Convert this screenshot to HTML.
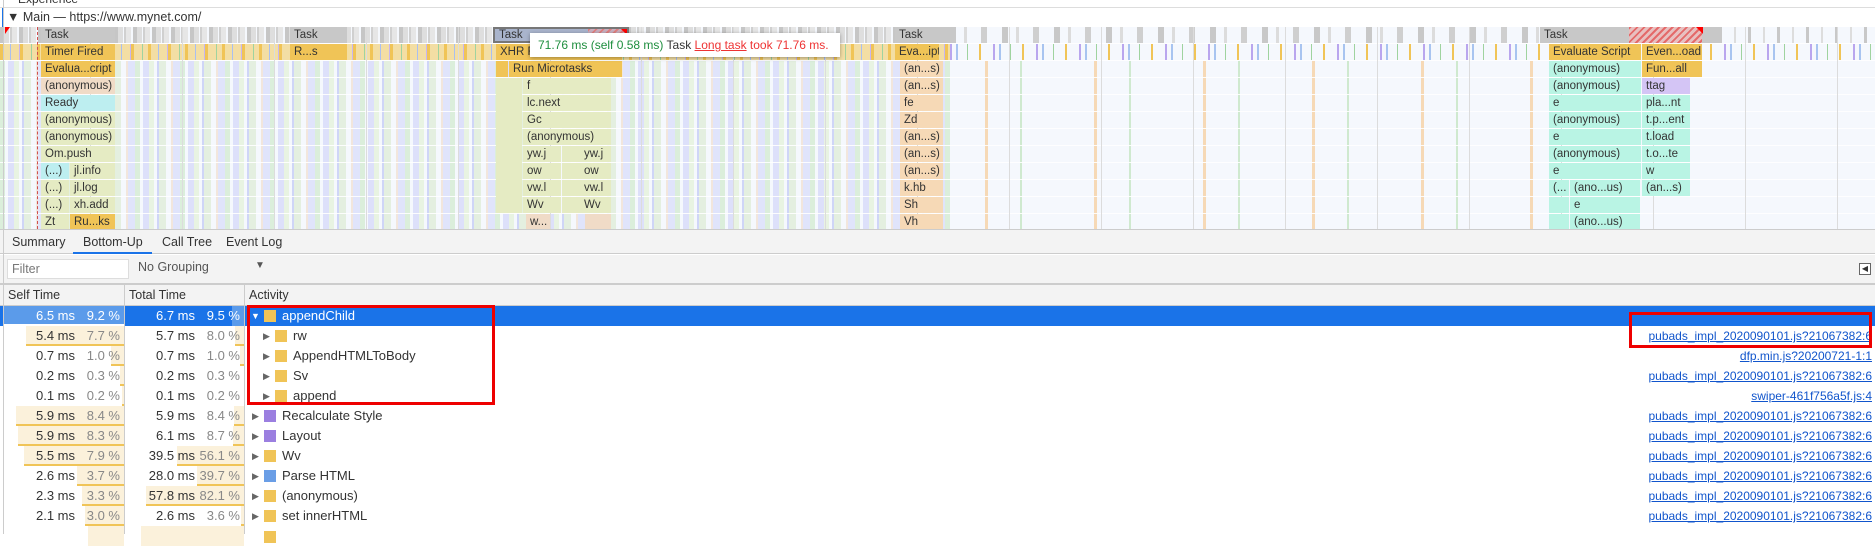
<!DOCTYPE html>
<html><head><meta charset="utf-8"><style>
*{box-sizing:border-box;margin:0;padding:0}
body{width:1875px;height:534px;overflow:hidden;background:#fff;font-family:"Liberation Sans",sans-serif;color:#333;position:relative}
.a{position:absolute}
.b{position:absolute;height:16px;font-size:11.5px;line-height:16px;padding-left:4px;white-space:nowrap;overflow:hidden;color:#333}
.g{position:absolute;top:27px;height:202px;width:1px;background:#dcdcdc}
.y{background:#f0c457}.p{background:#f0dbc7}.c{background:#bdeef0}.gr{background:#e5ebc3}.t{background:#b9f4e4}.pe{background:#f6d9b6}.gy{background:#c8c8c8}
.row{position:absolute;left:0;width:1875px;height:20px;font-size:13px;line-height:20px}
.v{position:absolute;text-align:right;top:0}
.v1{right:1800px}.v2{right:1755px;color:#888}.v3{right:1680px}.v4{right:1635px;color:#888}
.bar{position:absolute;top:0;height:20px;background:#fbf1db;border-bottom:2px solid #f0c457}
.ic{position:absolute;top:4px;width:12px;height:12px}
.ar{position:absolute;top:0;font-size:9px;color:#666}
.lk{position:absolute;right:3px;top:0;color:#1155cc;text-decoration:underline;font-size:12px}
</style></head><body>
<div class="a" style="left:0;top:0;width:1875px;height:8px;border-bottom:1px solid #ddd;overflow:hidden"><span style="position:absolute;left:18px;top:-8px;font-size:12px">Experience</span></div>
<div class="a" style="left:2px;top:8px;width:2px;height:20px;background:#1a73e8"></div>
<div class="a" style="left:7px;top:10px;font-size:12.5px;color:#333">▼ Main — https://www.mynet.com/</div>
<div class="a" style="left:0;top:27px;width:1875px;height:202px;background:#f5f8fd"></div>
<div class="a" style="left:0;top:27px;width:1290px;height:16px;background:repeating-linear-gradient(90deg,#c6c6c6 0 4px,#dedede 4px 9px,#f5f8fd 9px 10px,#d0d0d0 10px 12px,#e6e6e6 12px 17px,#f5f8fd 17px 19px)"></div>
<div class="a" style="left:950px;top:27px;width:590px;height:16px;background:repeating-linear-gradient(90deg,#c8c8c8 0 6px,#f5f8fd 6px 14px,#dcdcdc 14px 17px,#f5f8fd 17px 31px,#cfcfcf 31px 37px,#f5f8fd 37px 52px)"></div>
<div class="a" style="left:1719px;top:27px;width:156px;height:16px;background:repeating-linear-gradient(90deg,#c8c8c8 0 3px,#f5f8fd 3px 15px,#ddd 15px 17px,#f5f8fd 17px 29px)"></div>
<div class="a" style="left:0;top:44px;width:950px;height:16px;background:repeating-linear-gradient(90deg,#f0c457 0 3px,#f3dea4 3px 10px,#a9bff0 10px 11px,#f3dea4 11px 19px,#c8b6f0 19px 20px,#f0c457 20px 23px,#f3dea4 23px 31px,#9fd39f 31px 32px,#f3dea4 32px 37px)"></div>
<div class="a" style="left:950px;top:44px;width:925px;height:16px;background:repeating-linear-gradient(90deg,#b9a6ee 0 2px,#f5f8fd 2px 6px,#a8c4f0 6px 8px,#f5f8fd 8px 17px,#9fd39f 17px 18px,#f5f8fd 18px 29px,#f0c457 29px 31px,#f5f8fd 31px 43px)"></div>
<div class="a" style="left:0;top:61px;width:950px;height:168px;background:repeating-linear-gradient(90deg,#dbeedb 0 5px,#f5f8fd 5px 8px,#dde0fa 8px 14px,#e8f3e2 14px 19px,#f5f8fd 19px 22px,#cfd5f7 22px 24px,#e4efe0 24px 31px,#f5f8fd 31px 36px,#f2e6dc 36px 38px,#e0e4fb 38px 45px)"></div>
<div class="a" style="left:950px;top:61px;width:600px;height:168px;background:repeating-linear-gradient(90deg,#f5f8fd 0 35px,#f6d9b6 35px 38px,#f5f8fd 38px 70px,#cfe9cf 70px 72px,#f5f8fd 72px 109px)"></div>
<div class="a" style="left:0;top:27px;width:1875px;height:202px;background:repeating-linear-gradient(180deg,transparent 0 16px,rgba(255,255,255,.9) 16px 17px)"></div>
<div class="g" style="left:90px"></div><div class="g" style="left:182px"></div><div class="g" style="left:274px"></div><div class="g" style="left:366px"></div><div class="g" style="left:458px"></div><div class="g" style="left:550px"></div><div class="g" style="left:641px"></div><div class="g" style="left:733px"></div><div class="g" style="left:825px"></div><div class="g" style="left:917px"></div><div class="g" style="left:1009px"></div><div class="g" style="left:1101px"></div><div class="g" style="left:1193px"></div><div class="g" style="left:1285px"></div><div class="g" style="left:1377px"></div><div class="g" style="left:1469px"></div><div class="g" style="left:1561px"></div><div class="g" style="left:1653px"></div><div class="g" style="left:1745px"></div><div class="g" style="left:1837px"></div>
<div class="a" style="left:5px;top:27px;width:0;height:0;border-left:5px solid red;border-bottom:7px solid transparent"></div>
<div class="a" style="left:37px;top:27px;height:202px;border-left:1px dashed #d05050"></div>
<div class="b gy" style="left:41px;top:27px;width:74px">Task</div>
<div class="b y" style="left:41px;top:44px;width:74px">Timer Fired</div>
<div class="b y" style="left:41px;top:61px;width:74px">Evalua...cript</div>
<div class="b p" style="left:41px;top:78px;width:74px">(anonymous)</div>
<div class="b c" style="left:41px;top:95px;width:74px">Ready</div>
<div class="b gr" style="left:41px;top:112px;width:74px">(anonymous)</div>
<div class="b gr" style="left:41px;top:129px;width:74px">(anonymous)</div>
<div class="b gr" style="left:41px;top:146px;width:74px">Om.push</div>
<div class="b c" style="left:41px;top:163px;width:28px">(...)</div><div class="b gr" style="left:70px;top:163px;width:45px">jl.info</div>
<div class="b gr" style="left:41px;top:180px;width:28px">(...)</div><div class="b gr" style="left:70px;top:180px;width:45px">jl.log</div>
<div class="b gr" style="left:41px;top:197px;width:28px">(...)</div><div class="b gr" style="left:70px;top:197px;width:45px">xh.add</div>
<div class="b gr" style="left:41px;top:214px;width:28px;height:15px">Zt</div><div class="b y" style="left:70px;top:214px;width:45px;height:15px">Ru...ks</div>
<div class="b gy" style="left:290px;top:27px;width:57px">Task</div>
<div class="b y" style="left:290px;top:44px;width:57px">R...s</div>
<div class="b" style="left:493px;top:27px;width:136px;background:#a9b4cc;border:2px solid #777;line-height:12px">Task</div>
<div class="a" style="left:588px;top:29px;width:39px;height:12px;background:repeating-linear-gradient(135deg,#e08080 0 2px,#c9b0c0 2px 5px)"></div>
<div class="a" style="left:621px;top:29px;width:0;height:0;border-left:6px solid transparent;border-top:6px solid red"></div>
<div class="b y" style="left:496px;top:44px;width:126px">XHR R</div>
<div class="b y" style="left:496px;top:61px;width:12px"></div><div class="b y" style="left:509px;top:61px;width:113px">Run Microtasks</div>
<div class="b gr" style="left:496px;top:78px;width:26px;height:135px"></div>
<div class="b gr" style="left:523px;top:78px;width:88px">f</div>
<div class="b gr" style="left:523px;top:95px;width:88px">lc.next</div>
<div class="b gr" style="left:523px;top:112px;width:88px">Gc</div>
<div class="b gr" style="left:523px;top:129px;width:88px">(anonymous)</div>
<div class="b gr" style="left:523px;top:146px;width:38px">yw.j</div><div class="b gr" style="left:562px;top:146px;width:49px;padding-left:22px">yw.j</div>
<div class="b gr" style="left:523px;top:163px;width:38px">ow</div><div class="b gr" style="left:562px;top:163px;width:49px;padding-left:22px">ow</div>
<div class="b gr" style="left:523px;top:180px;width:38px">vw.l</div><div class="b gr" style="left:562px;top:180px;width:49px;padding-left:22px">vw.l</div>
<div class="b gr" style="left:523px;top:197px;width:38px">Wv</div><div class="b gr" style="left:562px;top:197px;width:49px;padding-left:22px">Wv</div>
<div class="b p" style="left:526px;top:214px;width:24px;height:15px">w...</div><div class="b p" style="left:585px;top:214px;width:26px;height:15px"></div>
<div class="b gy" style="left:895px;top:27px;width:55px">Task</div>
<div class="b y" style="left:895px;top:44px;width:44px">Eva...ipt</div>
<div class="b pe" style="left:900px;top:61px;width:43px">(an...s)</div>
<div class="b pe" style="left:900px;top:78px;width:43px">(an...s)</div>
<div class="b pe" style="left:900px;top:95px;width:43px">fe</div>
<div class="b pe" style="left:900px;top:112px;width:43px">Zd</div>
<div class="b pe" style="left:900px;top:129px;width:43px">(an...s)</div>
<div class="b pe" style="left:900px;top:146px;width:43px">(an...s)</div>
<div class="b pe" style="left:900px;top:163px;width:43px">(an...s)</div>
<div class="b pe" style="left:900px;top:180px;width:43px">k.hb</div>
<div class="b pe" style="left:900px;top:197px;width:43px">Sh</div>
<div class="b pe" style="left:900px;top:214px;width:43px;height:15px">Vh</div>
<div class="b gy" style="left:1540px;top:27px;width:179px">Task</div>
<div class="a" style="left:1629px;top:27px;width:73px;height:16px;background:repeating-linear-gradient(135deg,#e46a6a 0 2px,#e8c0c0 2px 5px)"></div>
<div class="a" style="left:1696px;top:27px;width:0;height:0;border-left:7px solid transparent;border-top:7px solid red"></div>
<div class="b y" style="left:1549px;top:44px;width:92px">Evaluate Script</div><div class="b y" style="left:1642px;top:44px;width:60px">Even...oad</div>
<div class="b t" style="left:1549px;top:61px;width:92px">(anonymous)</div><div class="b y" style="left:1642px;top:61px;width:60px">Fun...all</div>
<div class="b t" style="left:1549px;top:78px;width:92px">(anonymous)</div><div class="b" style="left:1642px;top:78px;width:48px;background:#d4c5f5">ttag</div>
<div class="b t" style="left:1549px;top:95px;width:92px">e</div><div class="b t" style="left:1642px;top:95px;width:48px">pla...nt</div>
<div class="b t" style="left:1549px;top:112px;width:92px">(anonymous)</div><div class="b t" style="left:1642px;top:112px;width:48px">t.p...ent</div>
<div class="b t" style="left:1549px;top:129px;width:92px">e</div><div class="b t" style="left:1642px;top:129px;width:48px">t.load</div>
<div class="b t" style="left:1549px;top:146px;width:92px">(anonymous)</div><div class="b t" style="left:1642px;top:146px;width:48px">t.o...te</div>
<div class="b t" style="left:1549px;top:163px;width:92px">e</div><div class="b t" style="left:1642px;top:163px;width:48px">w</div>
<div class="b t" style="left:1549px;top:180px;width:20px">(...</div><div class="b t" style="left:1570px;top:180px;width:70px">(ano...us)</div><div class="b t" style="left:1642px;top:180px;width:48px">(an...s)</div>
<div class="b t" style="left:1549px;top:197px;width:20px"></div><div class="b t" style="left:1570px;top:197px;width:70px">e</div>
<div class="b t" style="left:1549px;top:214px;width:20px;height:15px"></div><div class="b t" style="left:1570px;top:214px;width:70px;height:15px">(ano...us)</div>
<div class="a" style="left:530px;top:33px;width:310px;height:24px;background:#fff;box-shadow:0 1px 4px rgba(0,0,0,.35);font-size:12px;line-height:24px;padding-left:8px;white-space:nowrap"><span style="color:#1e8e3e">71.76 ms (self 0.58 ms)</span> <span style="color:#333">Task</span> <span style="color:#e33;text-decoration:underline">Long task</span><span style="color:#e33"> took 71.76 ms.</span></div>
<div class="a" style="left:0;top:229px;width:1875px;height:25px;background:#f3f3f3;border-top:1px solid #ccc;border-bottom:1px solid #ccc;font-size:12.5px;line-height:25px">
<span class="a" style="left:12px">Summary</span><span class="a" style="left:83px">Bottom-Up</span><span class="a" style="left:162px">Call Tree</span><span class="a" style="left:226px">Event Log</span>
<div class="a" style="left:73px;top:22px;width:79px;height:2px;background:#1a73e8"></div></div>
<div class="a" style="left:0;top:255px;width:1875px;height:30px;background:#f3f3f3;border-bottom:2px solid #ccc">
<div class="a" style="left:7px;top:4px;width:122px;height:20px;background:#fff;border:1px solid #ddd;font-size:12.5px;line-height:18px;padding-left:4px;color:#777">Filter</div>
<span class="a" style="left:138px;top:5px;font-size:12.5px;color:#555">No Grouping</span><span class="a" style="left:255px;top:5px;font-size:10px;color:#555">▼</span>
<div class="a" style="left:1859px;top:8px;width:12px;height:12px;border:1px solid #666;font-size:8px;line-height:10px;text-align:center;background:#fff">◀</div></div>
<div class="a" style="left:0;top:285px;width:1875px;height:21px;background:#f3f3f3;border-bottom:1px solid #ccc;font-size:12.5px;line-height:21px">
<span class="a" style="left:8px">Self Time</span><span class="a" style="left:129px">Total Time</span><span class="a" style="left:249px">Activity</span></div>

<div class="row" style="top:306px;background:#1a73e8;color:#fff">
<div class="a" style="left:4px;top:0;width:120px;height:20px;background:#5b9bea;border-bottom:2px solid #fff"></div>
<div class="a" style="left:232px;top:0;width:12px;height:20px;background:#5b9bea"></div>
<span class="v v1">6.5 ms</span><span class="v v2" style="color:#fff">9.2 %</span>
<span class="v v3">6.7 ms</span><span class="v v4" style="color:#fff">9.5 %</span>
<span class="ar" style="left:251px;color:#fff">▼</span><div class="ic" style="left:264px;background:#f0c457"></div><span class="a" style="left:282px">appendChild</span></div>

<div class="row" style="top:326px"><div class="bar" style="left:26px;width:98px"></div><div class="bar" style="left:235px;width:9px"></div>
<span class="v v1">5.4 ms</span><span class="v v2">7.7 %</span><span class="v v3">5.7 ms</span><span class="v v4">8.0 %</span>
<span class="ar" style="left:263px">▶</span><div class="ic" style="left:275px;background:#f0c457"></div><span class="a" style="left:293px">rw</span><span class="lk">pubads_impl_2020090101.js?21067382:6</span></div>

<div class="row" style="top:346px"><div class="bar" style="left:111px;width:13px"></div><div class="bar" style="left:240px;width:4px"></div>
<span class="v v1">0.7 ms</span><span class="v v2">1.0 %</span><span class="v v3">0.7 ms</span><span class="v v4">1.0 %</span>
<span class="ar" style="left:263px">▶</span><div class="ic" style="left:275px;background:#f0c457"></div><span class="a" style="left:293px">AppendHTMLToBody</span><span class="lk">dfp.min.js?20200721-1:1</span></div>

<div class="row" style="top:366px"><div class="bar" style="left:120px;width:4px"></div>
<span class="v v1">0.2 ms</span><span class="v v2">0.3 %</span><span class="v v3">0.2 ms</span><span class="v v4">0.3 %</span>
<span class="ar" style="left:263px">▶</span><div class="ic" style="left:275px;background:#f0c457"></div><span class="a" style="left:293px">Sv</span><span class="lk">pubads_impl_2020090101.js?21067382:6</span></div>

<div class="row" style="top:386px"><div class="bar" style="left:122px;width:2px"></div>
<span class="v v1">0.1 ms</span><span class="v v2">0.2 %</span><span class="v v3">0.1 ms</span><span class="v v4">0.2 %</span>
<span class="ar" style="left:263px">▶</span><div class="ic" style="left:275px;background:#f0c457"></div><span class="a" style="left:293px">append</span><span class="lk">swiper-461f756a5f.js:4</span></div>

<div class="row" style="top:406px"><div class="bar" style="left:16px;width:108px"></div><div class="bar" style="left:234px;width:10px"></div>
<span class="v v1">5.9 ms</span><span class="v v2">8.4 %</span><span class="v v3">5.9 ms</span><span class="v v4">8.4 %</span>
<span class="ar" style="left:252px">▶</span><div class="ic" style="left:264px;background:#9b7fe0"></div><span class="a" style="left:282px">Recalculate Style</span><span class="lk">pubads_impl_2020090101.js?21067382:6</span></div>

<div class="row" style="top:426px"><div class="bar" style="left:18px;width:106px"></div><div class="bar" style="left:233px;width:11px"></div>
<span class="v v1">5.9 ms</span><span class="v v2">8.3 %</span><span class="v v3">6.1 ms</span><span class="v v4">8.7 %</span>
<span class="ar" style="left:252px">▶</span><div class="ic" style="left:264px;background:#9b7fe0"></div><span class="a" style="left:282px">Layout</span><span class="lk">pubads_impl_2020090101.js?21067382:6</span></div>

<div class="row" style="top:446px"><div class="bar" style="left:24px;width:100px"></div><div class="bar" style="left:177px;width:67px"></div>
<span class="v v1">5.5 ms</span><span class="v v2">7.9 %</span><span class="v v3">39.5 ms</span><span class="v v4">56.1 %</span>
<span class="ar" style="left:252px">▶</span><div class="ic" style="left:264px;background:#f0c457"></div><span class="a" style="left:282px">Wv</span><span class="lk">pubads_impl_2020090101.js?21067382:6</span></div>

<div class="row" style="top:466px"><div class="bar" style="left:77px;width:47px"></div><div class="bar" style="left:197px;width:47px"></div>
<span class="v v1">2.6 ms</span><span class="v v2">3.7 %</span><span class="v v3">28.0 ms</span><span class="v v4">39.7 %</span>
<span class="ar" style="left:252px">▶</span><div class="ic" style="left:264px;background:#6a9ee6"></div><span class="a" style="left:282px">Parse HTML</span><span class="lk">pubads_impl_2020090101.js?21067382:6</span></div>

<div class="row" style="top:486px"><div class="bar" style="left:82px;width:42px"></div><div class="bar" style="left:146px;width:98px"></div>
<span class="v v1">2.3 ms</span><span class="v v2">3.3 %</span><span class="v v3">57.8 ms</span><span class="v v4">82.1 %</span>
<span class="ar" style="left:252px">▶</span><div class="ic" style="left:264px;background:#f0c457"></div><span class="a" style="left:282px">(anonymous)</span><span class="lk">pubads_impl_2020090101.js?21067382:6</span></div>

<div class="row" style="top:506px"><div class="bar" style="left:85px;width:39px"></div><div class="bar" style="left:241px;width:3px"></div>
<span class="v v1">2.1 ms</span><span class="v v2">3.0 %</span><span class="v v3">2.6 ms</span><span class="v v4">3.6 %</span>
<span class="ar" style="left:252px">▶</span><div class="ic" style="left:264px;background:#f0c457"></div><span class="a" style="left:282px">set innerHTML</span><span class="lk">pubads_impl_2020090101.js?21067382:6</span></div>

<div class="row" style="top:526px"><div class="bar" style="left:88px;width:36px;border:0"></div><div class="bar" style="left:141px;width:103px;border:0"></div><div class="ic" style="left:264px;top:5px;background:#f0c457"></div></div>

<div class="a" style="left:124px;top:285px;width:1px;height:249px;background:#ccc"></div>
<div class="a" style="left:244px;top:285px;width:1px;height:249px;background:#ccc"></div>
<div class="a" style="left:3px;top:0;width:1px;height:534px;background:#ccc"></div>
<div class="a" style="left:247px;top:305px;width:248px;height:100px;border:3px solid #e00"></div>
<div class="a" style="left:1629px;top:312px;width:243px;height:36px;border:3px solid #e00"></div>
</body></html>
